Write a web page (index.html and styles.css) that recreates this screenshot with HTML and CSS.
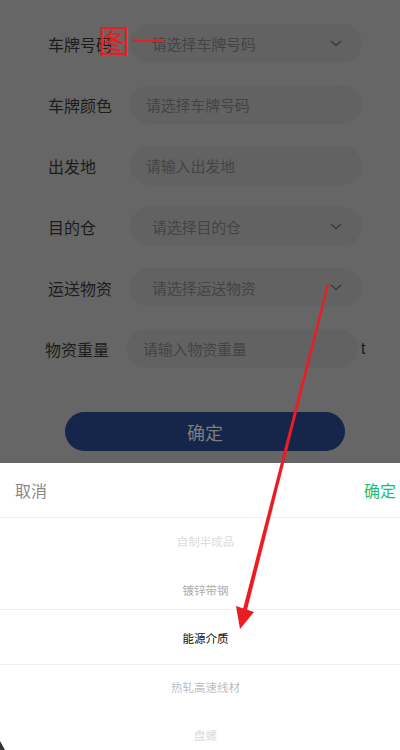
FILE: index.html
```html
<!DOCTYPE html>
<html lang="zh-CN">
<head>
<meta charset="utf-8">
<title>车辆登记</title>
<link rel="stylesheet" href="styles.css">
</head>
<body>
<div class="page">
  <div class="form">
    <div class="row">
      <div class="label">车牌号码</div>
      <div class="field select"><span class="ph">请选择车牌号码</span><svg class="chev" viewBox="0 0 12 7"><path d="M1 1 L6 5.5 L11 1" /></svg></div>
    </div>
    <div class="row">
      <div class="label">车牌颜色</div>
      <div class="field input"><span class="ph">请选择车牌号码</span></div>
    </div>
    <div class="row">
      <div class="label">出发地</div>
      <div class="field input"><span class="ph">请输入出发地</span></div>
    </div>
    <div class="row">
      <div class="label">目的仓</div>
      <div class="field select"><span class="ph">请选择目的仓</span><svg class="chev" viewBox="0 0 12 7"><path d="M1 1 L6 5.5 L11 1" /></svg></div>
    </div>
    <div class="row">
      <div class="label">运送物资</div>
      <div class="field select"><span class="ph">请选择运送物资</span><svg class="chev" viewBox="0 0 12 7"><path d="M1 1 L6 5.5 L11 1" /></svg></div>
    </div>
    <div class="row row-weight">
      <div class="label">物资重量</div>
      <div class="field input narrow"><span class="ph">请输入物资重量</span></div>
      <div class="unit">t</div>
    </div>
    <div class="btn-wrap">
      <div class="btn">确定</div>
    </div>
  </div>
</div>

<div class="sheet">
  <div class="sheet-head">
    <span class="cancel">取消</span>
    <span class="confirm">确定</span>
  </div>
  <div class="picker">
    <div class="picker-col">
      <div class="item c1">自制半成品</div>
      <div class="item c2">镀锌带钢</div>
      <div class="item sel">能源介质</div>
      <div class="item c2b">热轧高速线材</div>
      <div class="item c1">盘螺</div>
    </div>
    <div class="band"></div>
  </div>
</div>

<div class="note">图一</div>
<svg class="arrow" viewBox="0 0 400 750" width="400" height="750">
  <polygon points="327,284 329,285 247,610 243,609" fill="#ec1c24"/>
  <polygon points="236,606 254,612 240,629" fill="#ec1c24"/>
  <polygon points="0,741 5,750 0,750" fill="#333"/>
</svg>
</body>
</html>
```
FILE: styles.css
```css
html, body {
  margin: 0;
  padding: 0;
}
body {
  width: 400px;
  height: 750px;
  overflow: hidden;
  background: #666666;
  font-family: "Noto Sans CJK SC", "Noto Sans", sans-serif;
  position: relative;
}
.page {
  height: 750px;
}
.form {
  padding-top: 24px;
  display: flex;
  flex-direction: column;
  gap: 22px;
}
.row {
  display: flex;
  align-items: center;
  padding-left: 48px;
  height: 39px;
}
.row-weight {
  padding-left: 45px;
}
.label {
  width: 82px;
  font-size: 16px;
  color: #1c1c1c;
  white-space: nowrap;
}
.field {
  width: 232px;
  height: 39px;
  border-radius: 20px;
  background: #626262;
  display: flex;
  align-items: center;
  box-sizing: border-box;
}
.field.select {
  padding-left: 22px;
  padding-right: 20px;
  justify-content: space-between;
}
.field.input {
  padding-left: 16px;
}
.field.narrow {
  width: 231px;
}
.ph {
  font-size: 15px;
  color: #444;
  letter-spacing: -0.2px;
}
.chev {
  width: 12px;
  height: 7px;
  fill: none;
  stroke: #3a3a3a;
  stroke-width: 1.4;
}
.unit {
  margin-left: 3px;
  font-size: 16px;
  color: #1c1c1c;
  font-family: "Liberation Sans", sans-serif;
}
.btn-wrap {
  margin-top: 22px;
  display: flex;
  padding-left: 65px;
}
.btn {
  width: 280px;
  height: 39px;
  border-radius: 20px;
  background: #16254a;
  color: #7d7d7d;
  font-size: 18px;
  display: flex;
  align-items: center;
  justify-content: center;
}

.sheet {
  position: absolute;
  left: 0;
  right: 0;
  top: 463px;
  height: 287px;
  background: #fff;
  overflow: hidden;
}
.sheet-head {
  height: 54px;
  border-bottom: 1px solid #f0f0f0;
  display: flex;
  align-items: center;
  justify-content: space-between;
  padding: 0 4px 0 15px;
  font-size: 16px;
}
.cancel {
  color: #888;
}
.confirm {
  color: #1bc06e;
}
.picker {
  position: relative;
  height: 232px;
}
.picker-col {
  margin-top: -1px;
  padding-left: 11px;
}
.item {
  height: 48.5px;
  display: flex;
  align-items: center;
  justify-content: center;
  font-size: 11.5px;
}
.c1 { color: #dcdcdc; }
.c2 { color: #adadad; }
.c2b { color: #bdbdbd; }
.sel { color: #111; }
.band {
  position: absolute;
  left: 0;
  right: 0;
  top: 92px;
  height: 56px;
  border-top: 1px solid #f0f0f0;
  border-bottom: 1px solid #f0f0f0;
  box-sizing: border-box;
}

.note {
  position: absolute;
  left: 98px;
  top: 23px;
  font-size: 32px;
  line-height: 32px;
  color: #ec1c24;
  letter-spacing: 2px;
}
.arrow {
  position: absolute;
  left: 0;
  top: 0;
  pointer-events: none;
}
```
